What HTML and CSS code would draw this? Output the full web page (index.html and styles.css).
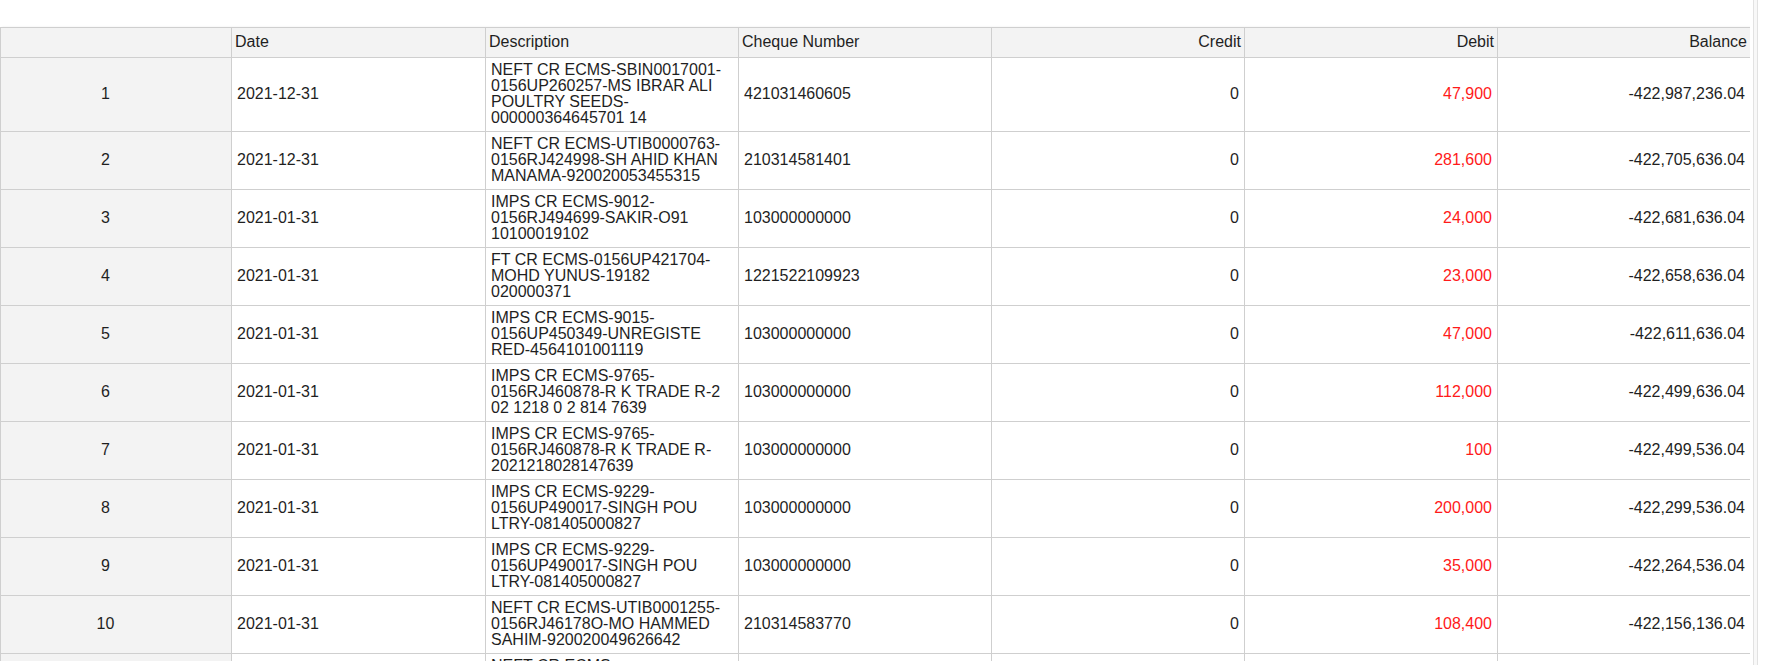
FILE: index.html
```html
<!DOCTYPE html>
<html lang="en">
<head>
<meta charset="utf-8">
<title>Statement</title>
<link rel="stylesheet" href="styles.css">
</head>
<body>
<div class="page">
  <div class="grid-wrap">
    <table class="grid">
      <colgroup>
        <col class="c-idx"><col class="c-date"><col class="c-desc"><col class="c-chq"><col class="c-num"><col class="c-num"><col class="c-bal">
      </colgroup>
      <thead>
        <tr>
          <th class="corner"></th>
          <th>Date</th>
          <th>Description</th>
          <th>Cheque Number</th>
          <th class="r">Credit</th>
          <th class="r">Debit</th>
          <th class="r">Balance</th>
        </tr>
      </thead>
      <tbody>
        <tr><td class="idx">1</td><td>2021-12-31</td><td>NEFT CR ECMS-SBIN0017001-<br>0156UP260257-MS IBRAR ALI<br>POULTRY SEEDS-<br>000000364645701 14</td><td>421031460605</td><td class="r">0</td><td class="r debit">47,900</td><td class="r">-422,987,236.04</td></tr>
        <tr><td class="idx">2</td><td>2021-12-31</td><td>NEFT CR ECMS-UTIB0000763-<br>0156RJ424998-SH AHID KHAN<br>MANAMA-920020053455315</td><td>210314581401</td><td class="r">0</td><td class="r debit">281,600</td><td class="r">-422,705,636.04</td></tr>
        <tr><td class="idx">3</td><td>2021-01-31</td><td>IMPS CR ECMS-9012-<br>0156RJ494699-SAKIR-O91<br>10100019102</td><td>103000000000</td><td class="r">0</td><td class="r debit">24,000</td><td class="r">-422,681,636.04</td></tr>
        <tr><td class="idx">4</td><td>2021-01-31</td><td>FT CR ECMS-0156UP421704-<br>MOHD YUNUS-19182<br>020000371</td><td>1221522109923</td><td class="r">0</td><td class="r debit">23,000</td><td class="r">-422,658,636.04</td></tr>
        <tr><td class="idx">5</td><td>2021-01-31</td><td>IMPS CR ECMS-9015-<br>0156UP450349-UNREGISTE<br>RED-4564101001119</td><td>103000000000</td><td class="r">0</td><td class="r debit">47,000</td><td class="r">-422,611,636.04</td></tr>
        <tr><td class="idx">6</td><td>2021-01-31</td><td>IMPS CR ECMS-9765-<br>0156RJ460878-R K TRADE R-2<br>02 1218 0 2 814 7639</td><td>103000000000</td><td class="r">0</td><td class="r debit">112,000</td><td class="r">-422,499,636.04</td></tr>
        <tr><td class="idx">7</td><td>2021-01-31</td><td>IMPS CR ECMS-9765-<br>0156RJ460878-R K TRADE R-<br>2021218028147639</td><td>103000000000</td><td class="r">0</td><td class="r debit">100</td><td class="r">-422,499,536.04</td></tr>
        <tr><td class="idx">8</td><td>2021-01-31</td><td>IMPS CR ECMS-9229-<br>0156UP490017-SINGH POU<br>LTRY-081405000827</td><td>103000000000</td><td class="r">0</td><td class="r debit">200,000</td><td class="r">-422,299,536.04</td></tr>
        <tr><td class="idx">9</td><td>2021-01-31</td><td>IMPS CR ECMS-9229-<br>0156UP490017-SINGH POU<br>LTRY-081405000827</td><td>103000000000</td><td class="r">0</td><td class="r debit">35,000</td><td class="r">-422,264,536.04</td></tr>
        <tr><td class="idx">10</td><td>2021-01-31</td><td>NEFT CR ECMS-UTIB0001255-<br>0156RJ46178O-MO HAMMED<br>SAHIM-920020049626642</td><td>210314583770</td><td class="r">0</td><td class="r debit">108,400</td><td class="r">-422,156,136.04</td></tr>
        <tr><td class="idx">11</td><td>2021-01-31</td><td>NEFT CR ECMS-<br>UTIB0001255-0156RJ461781<br>SAHIM-920020049626642</td><td>210314583771</td><td class="r">0</td><td class="r debit">50,000</td><td class="r">-422,106,136.04</td></tr>
      </tbody>
    </table>
  </div>
  <div class="vbar"></div>
</div>
</body>
</html>
```

FILE: styles.css
```css
html, body {
  margin: 0;
  padding: 0;
  background: #ffffff;
}

body {
  font-family: "Liberation Sans", Arial, sans-serif;
  font-size: 16px;
  color: #1f1f1f;
}

.page {
  display: flex;
  height: 665px;
  overflow: hidden;
}

.grid-wrap {
  width: 1750px;
  height: 661px;
  padding-top: 27px;
  box-sizing: border-box;
  overflow: hidden;
  flex: none;
}

.grid {
  border-collapse: collapse;
  table-layout: fixed;
  width: 1750px;
  box-shadow: 2px 0 2px rgba(0, 0, 0, 0.08);
}

.c-idx { width: 231px; }
.c-date { width: 254px; }
.c-desc { width: 253px; }
.c-chq { width: 253px; }
.c-num { width: 253px; }
.c-bal { width: 253px; }

.grid th,
.grid td {
  border: 1px solid #cfcfcf;
  line-height: 16px;
  vertical-align: middle;
  text-align: left;
  overflow: hidden;
}

.grid th {
  background: #f3f3f3;
  font-weight: normal;
  padding: 6px 3px 7px;
  white-space: nowrap;
}

.grid td {
  padding: 4px 5px 5px;
  background: #ffffff;
}

.grid .r {
  text-align: right;
}

.grid td.idx {
  background: #f3f3f3;
  text-align: center;
  padding-left: 5px;
  padding-right: 26px;
}

.grid td.debit {
  color: #ff1a1a;
}

.vbar {
  flex: none;
  width: 3px;
  height: 665px;
  margin-left: 3px;
  border-left: 1px solid #e2e2e2;
  border-right: 1px solid #e2e2e2;
  background: #f8f8f8;
}
```
